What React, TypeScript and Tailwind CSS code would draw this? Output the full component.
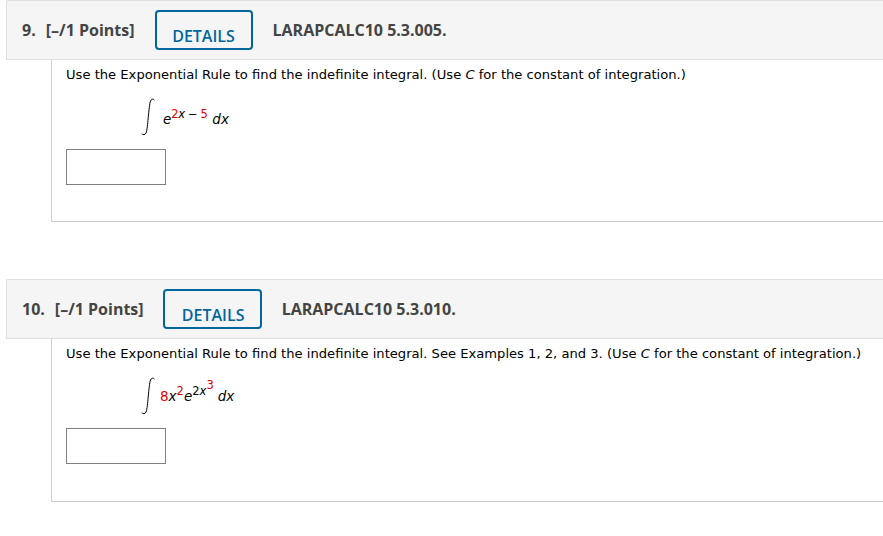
const Question = ({
  num,
  ref_,
  text,
  btn,
  refGap,
  bodyH,
  formula,
}: {
  num: string;
  ref_: string;
  text: React.ReactNode;
  btn: string;
  refGap: string;
  bodyH: string;
  formula: React.ReactNode;
}) => (
  <div>
    {/* Header */}
    <div className="ml-[6px] h-[60px] flex items-center bg-[#f5f5f5] border border-r-0 border-[#dfdfdf] rounded-tl-[2px] font-['Open_Sans',sans-serif] font-bold text-[#444] text-[16px]">
      <span className="ml-[15px] flex whitespace-nowrap">
        <span className="mr-[10px]">{num}</span>
        <span>[–/1 Points]</span>
      </span>
      <div className={`${btn} h-[40px] flex items-end justify-center border-2 border-[#00679c] rounded-[4px] text-[#00679c] font-semibold`}>
        DETAILS
      </div>
      <span className={`${refGap} whitespace-nowrap`}>{ref_}</span>
    </div>

    {/* Body */}
    <div className={`ml-[51px] ${bodyH} pl-[14px] pt-[5px] border-l border-b border-[#cfcfcf] font-['DejaVu_Sans',sans-serif] text-[13.12px] text-black`}>
      <p className="leading-[20px] whitespace-nowrap">{text}</p>
      <div className="h-[50px] mt-[5px] ml-[74px] flex items-center text-[13.5px] whitespace-nowrap">
        {formula}
      </div>
      <div className="mt-[9px] w-[100px] h-[36px] border border-[#808080] bg-white" />
    </div>
  </div>
);

// drawn as a thin stroke, the math font in the picture has a very light integral sign
const Integral = () => (
  <svg width="16" height="38" viewBox="0 0 16 38" className="mt-[4px] mr-[7px] shrink-0 text-black" fill="none">
    <path
      d="M14.5 2.2 C13.5 0.6 11.4 0.8 10.5 3 C9.6 5.4 9 12 8.2 20 C7.6 26 7.2 32 6 35 C5.2 37 2.8 37.2 1.8 35.6"
      stroke="currentColor"
      strokeWidth="1"
    />
  </svg>
);

export default function App() {
  return (
    <div className="w-[883px] h-[536px] overflow-hidden bg-white">
      <Question
        num="9."
        ref_="LARAPCALC10 5.3.005."
        btn="ml-[21px] w-[98px] pr-[2px]"
        refGap="ml-[19px]"
        bodyH="h-[162px]"
        text={
          <>
            Use the Exponential Rule to find the indefinite integral. (Use <i>C</i> for the constant of integration.)
          </>
        }
        formula={
          <>
            <Integral />
            <span className="flex items-baseline mt-[8px]">
              <i>e</i>
              <span className="relative -top-[6px] text-[11.5px] tracking-[-0.4px]">
                <span className="text-[#e00000]">2</span>
                <i>x</i> − <span className="text-[#e00000]">5</span>
              </span>
              <i className="ml-[5px]">dx</i>
            </span>
          </>
        }
      />
      <div className="mt-[57px]">
        <Question
          num="10."
          ref_="LARAPCALC10 5.3.010."
          btn="ml-[19px] w-[99px] pl-[2px]"
          refGap="ml-[20px]"
          bodyH="h-[163px]"
          text={
            <>
              Use the Exponential Rule to find the indefinite integral. See Examples 1, 2, and 3. (Use <i>C</i> for the constant of integration.)
            </>
          }
          formula={
            <>
              <Integral />
              <span className="flex items-baseline mt-[4px] -ml-[3px]">
                <span className="text-[#e00000]">8</span>
                <i>x</i>
                <span className="relative -top-[6px] text-[#e00000] text-[11.5px]">2</span>
                <i>e</i>
                <span className="relative -top-[6px] text-[11.5px]">
                  2<i>x</i>
                </span>
                <span className="relative -top-[12px] text-[#e00000] text-[11.5px]">3</span>
                <i className="ml-[4px]">dx</i>
              </span>
            </>
          }
        />
      </div>
    </div>
  );
}
